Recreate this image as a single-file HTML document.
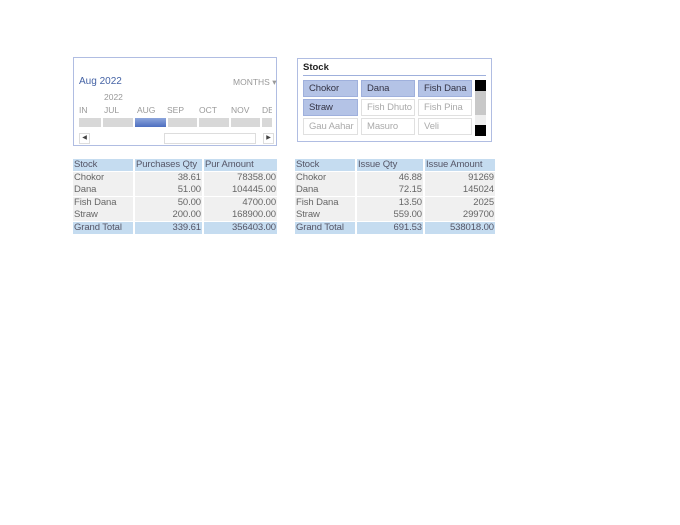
<!DOCTYPE html><html><head><style>
body{margin:0;width:680px;height:525px;background:#fff;font-family:"Liberation Sans",sans-serif;position:relative;overflow:hidden}
.a{position:absolute}
.t{font-size:10px;color:#777;white-space:nowrap}
.c{position:absolute;height:12px;font-size:9.5px;line-height:12px;color:#666;white-space:nowrap;box-sizing:border-box;padding:0 1px;letter-spacing:-0.1px;overflow:hidden}
.h{background:#c5dcf0;color:#556}
.g{background:#f0f0f0}
.r{text-align:right}
.b{position:absolute;box-sizing:border-box;font-size:9.5px;line-height:15px;padding-left:5px;border:1px solid #ddd;color:#aaa;white-space:nowrap;overflow:hidden;letter-spacing:-0.1px}
.s{background:#b4c3e6;border-color:#9fb0dc;color:#334}
.u{background:#fff;border-color:#e0e0e0}
</style></head><body>
<div class="a" style="left:73px;top:57px;width:204px;height:89px;border:1px solid #b0bde2;box-sizing:border-box"></div>
<div class="a" style="left:79px;top:76px;font-size:10px;color:#4563a5">Aug 2022</div>
<div class="a t" style="left:233px;top:77px;font-size:8.5px;color:#999">MONTHS ▾</div>
<div class="a t" style="left:104px;top:92px;font-size:8.5px;color:#999">2022</div>
<div class="a t" style="left:79px;top:105px;font-size:8.5px;color:#999">IN</div>
<div class="a t" style="left:104px;top:105px;font-size:8.5px;color:#999">JUL</div>
<div class="a t" style="left:137px;top:105px;font-size:8.5px;color:#999">AUG</div>
<div class="a t" style="left:167px;top:105px;font-size:8.5px;color:#999">SEP</div>
<div class="a t" style="left:199px;top:105px;font-size:8.5px;color:#999">OCT</div>
<div class="a t" style="left:231px;top:105px;font-size:8.5px;color:#999">NOV</div>
<div class="a t" style="left:262px;top:105px;font-size:8.5px;color:#999;width:10px;overflow:hidden">DEC</div>
<div class="a" style="left:79px;top:118px;width:22px;height:9px;background:#d8d8d8"></div>
<div class="a" style="left:103px;top:118px;width:30px;height:9px;background:#d8d8d8"></div>
<div class="a" style="left:135px;top:118px;width:31px;height:9px;background:linear-gradient(#8ea6dc,#4d6fc0)"></div>
<div class="a" style="left:168px;top:118px;width:29px;height:9px;background:#d8d8d8"></div>
<div class="a" style="left:199px;top:118px;width:30px;height:9px;background:#d8d8d8"></div>
<div class="a" style="left:231px;top:118px;width:29px;height:9px;background:#d8d8d8"></div>
<div class="a" style="left:262px;top:118px;width:10px;height:9px;background:#d8d8d8"></div>
<div class="a" style="left:79px;top:133px;width:9px;height:9px;border:1px solid #ddd;font-size:6px;line-height:9px;text-align:center;color:#444">◀</div>
<div class="a" style="left:164px;top:133px;width:90px;height:9px;border:1px solid #ddd"></div>
<div class="a" style="left:263px;top:133px;width:9px;height:9px;border:1px solid #ddd;font-size:6px;line-height:9px;text-align:center;color:#444">▶</div>

<div class="a" style="left:297px;top:58px;width:195px;height:84px;border:1px solid #b0bde2;box-sizing:border-box"></div>
<div class="a" style="left:303px;top:62px;font-size:9.5px;font-weight:bold;color:#222">Stock</div>
<div class="a" style="left:303px;top:75px;width:183px;height:1px;background:#9fb0dc"></div>
<div class="b s" style="left:303px;top:80px;width:55px;height:17px">Chokor</div>
<div class="b s" style="left:361px;top:80px;width:54px;height:17px">Dana</div>
<div class="b s" style="left:418px;top:80px;width:54px;height:17px">Fish Dana</div>
<div class="b s" style="left:303px;top:99px;width:55px;height:17px">Straw</div>
<div class="b u" style="left:361px;top:99px;width:54px;height:17px">Fish Dhuto</div>
<div class="b u" style="left:418px;top:99px;width:54px;height:17px">Fish Pina</div>
<div class="b u" style="left:303px;top:118px;width:55px;height:17px">Gau Aahar</div>
<div class="b u" style="left:361px;top:118px;width:54px;height:17px">Masuro</div>
<div class="b u" style="left:418px;top:118px;width:54px;height:17px">Veli</div>
<div class="a" style="left:475px;top:80px;width:11px;height:56px;background:#eee"></div>
<div class="a" style="left:475px;top:80px;width:11px;height:11px;background:#000"></div>
<div class="a" style="left:475px;top:91px;width:11px;height:24px;background:#c8c8c8"></div>
<div class="a" style="left:475px;top:125px;width:11px;height:11px;background:#000"></div>

<div class="c h" style="left:73px;top:159px;width:60px">Stock</div>
<div class="c h" style="left:135px;top:159px;width:67px">Purchases Qty</div>
<div class="c h" style="left:204px;top:159px;width:73px">Pur Amount</div>
<div class="c g" style="left:73px;top:172px;width:60px">Chokor</div><div class="c g r" style="left:135px;top:172px;width:67px">38.61</div><div class="c g r" style="left:204px;top:172px;width:73px">78358.00</div>
<div class="c g" style="left:73px;top:184px;width:60px">Dana</div><div class="c g r" style="left:135px;top:184px;width:67px">51.00</div><div class="c g r" style="left:204px;top:184px;width:73px">104445.00</div>
<div class="c g" style="left:73px;top:197px;width:60px">Fish Dana</div><div class="c g r" style="left:135px;top:197px;width:67px">50.00</div><div class="c g r" style="left:204px;top:197px;width:73px">4700.00</div>
<div class="c g" style="left:73px;top:209px;width:60px">Straw</div><div class="c g r" style="left:135px;top:209px;width:67px">200.00</div><div class="c g r" style="left:204px;top:209px;width:73px">168900.00</div>
<div class="c h" style="left:73px;top:222px;width:60px">Grand Total</div><div class="c h r" style="left:135px;top:222px;width:67px">339.61</div><div class="c h r" style="left:204px;top:222px;width:73px">356403.00</div>

<div class="c h" style="left:295px;top:159px;width:60px">Stock</div>
<div class="c h" style="left:357px;top:159px;width:66px">Issue Qty</div>
<div class="c h" style="left:425px;top:159px;width:70px">Issue Amount</div>
<div class="c g" style="left:295px;top:172px;width:60px">Chokor</div><div class="c g r" style="left:357px;top:172px;width:66px">46.88</div><div class="c g r" style="left:425px;top:172px;width:70px">91269</div>
<div class="c g" style="left:295px;top:184px;width:60px">Dana</div><div class="c g r" style="left:357px;top:184px;width:66px">72.15</div><div class="c g r" style="left:425px;top:184px;width:70px">145024</div>
<div class="c g" style="left:295px;top:197px;width:60px">Fish Dana</div><div class="c g r" style="left:357px;top:197px;width:66px">13.50</div><div class="c g r" style="left:425px;top:197px;width:70px">2025</div>
<div class="c g" style="left:295px;top:209px;width:60px">Straw</div><div class="c g r" style="left:357px;top:209px;width:66px">559.00</div><div class="c g r" style="left:425px;top:209px;width:70px">299700</div>
<div class="c h" style="left:295px;top:222px;width:60px">Grand Total</div><div class="c h r" style="left:357px;top:222px;width:66px">691.53</div><div class="c h r" style="left:425px;top:222px;width:70px">538018.00</div>
</body></html>
